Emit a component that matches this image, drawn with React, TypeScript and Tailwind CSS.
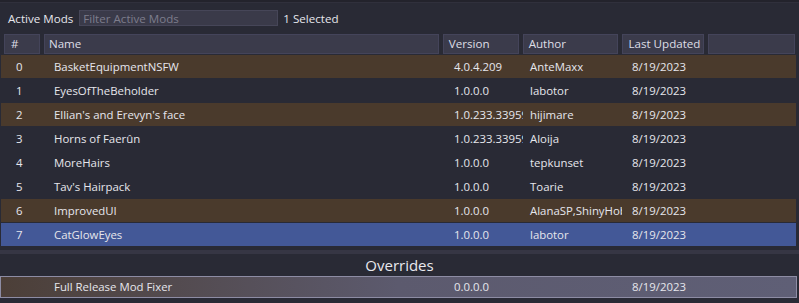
import React from "react";

type Row = { n: number; name: string; version: string; author: string; date: string; kind: "brown" | "plain" | "sel" };

const rows: Row[] = [
  { n: 0, name: "BasketEquipmentNSFW", version: "4.0.4.209", author: "AnteMaxx", date: "8/19/2023", kind: "brown" },
  { n: 1, name: "EyesOfTheBeholder", version: "1.0.0.0", author: "labotor", date: "8/19/2023", kind: "plain" },
  { n: 2, name: "Ellian's and Erevyn's face", version: "1.0.233.33959", author: "hijimare", date: "8/19/2023", kind: "brown" },
  { n: 3, name: "Horns of Faerûn", version: "1.0.233.33959", author: "Aloija", date: "8/19/2023", kind: "plain" },
  { n: 4, name: "MoreHairs", version: "1.0.0.0", author: "tepkunset", date: "8/19/2023", kind: "plain" },
  { n: 5, name: "Tav's Hairpack", version: "1.0.0.0", author: "Toarie", date: "8/19/2023", kind: "plain" },
  { n: 6, name: "ImprovedUI", version: "1.0.0.0", author: "AlanaSP,ShinyHobo", date: "8/19/2023", kind: "brown" },
  { n: 7, name: "CatGlowEyes", version: "1.0.0.0", author: "labotor", date: "8/19/2023", kind: "sel" },
];

const font = { fontFamily: '"Open Sans", "Noto Sans", sans-serif' };

export default function App() {
  return (
    <div className="w-[799px] h-[303px] bg-[#292a35] text-[#e6e6ec] text-[11.4px] overflow-hidden relative" style={font}>
      <div className="h-[3px] bg-[#23232c] border-b border-[#30303c]" />
      <div className="flex items-center h-[16px] mt-[7px] pl-[8px] text-[11.6px]">
        <span className="mt-[2px]">Active Mods</span>
        <div className="ml-[6px] w-[199px] h-[16px] bg-[#3a3a49] border border-[#464658] flex items-center pl-[3px] text-[#7d7d8c]">
          <span className="mt-[1px]">Filter Active Mods</span>
        </div>
        <span className="ml-[5px] mt-[2px]">1 Selected</span>
      </div>
      <div className="flex gap-[4px] mt-[8px] px-[4px] h-[20px] text-[#dedee6] text-[11.6px]">
        <div className="w-[36px] bg-[#3b3b4b] border border-[#44445a] flex items-center pl-[6px]">#</div>
        <div className="w-[396px] bg-[#3b3b4b] border border-[#44445a] flex items-center pl-[4px]">Name</div>
        <div className="w-[76px] bg-[#3b3b4b] border border-[#44445a] flex items-center pl-[5px]">Version</div>
        <div className="w-[96px] bg-[#3b3b4b] border border-[#44445a] flex items-center pl-[5px]">Author</div>
        <div className="w-[82px] bg-[#3b3b4b] border border-[#44445a] flex items-center pl-[5px]">Last Updated</div>
        <div className="w-[87px] bg-[#3b3b4b] border border-[#44445a]" />
      </div>
      <div className="flex flex-col gap-[1px] mt-[1px] pl-[1px] pr-[3px]">
        {rows.map((r) => (
          <div
            key={r.n}
            className={
              "flex h-[23px] items-center " +
              (r.kind === "brown" ? "bg-[#4a3a2c]" : r.kind === "sel" ? "bg-[#435897]" : "bg-[#292a35]")
            }
          >
            <div className="w-[43px] pl-[15px] shrink-0">{r.n}</div>
            <div className="w-[400px] pl-[10px] shrink-0 overflow-hidden whitespace-nowrap">{r.name}</div>
            <div className="w-[79px] pl-[10px] shrink-0 overflow-hidden whitespace-nowrap">{r.version}</div>
            <div className="w-[99px] pl-[7px] shrink-0 overflow-hidden whitespace-nowrap">{r.author}</div>
            <div className="w-[90px] pl-[10px] shrink-0 whitespace-nowrap">{r.date}</div>
          </div>
        ))}
      </div>
      <div className="mt-[4px] h-[4px] bg-[#363644]" />
      <div className="h-[22px] flex items-center justify-center text-[15px] text-[#e8e8ee]">Overrides</div>
      <div className="flex h-[22px] items-center border border-[#8d8ca4] mr-[2px] bg-gradient-to-r from-[#4c3f38] via-[#5c5a6e] to-[#5f5f76]">
        <div className="w-[43px] shrink-0" />
        <div className="w-[400px] pl-[10px] shrink-0 whitespace-nowrap">Full Release Mod Fixer</div>
        <div className="w-[79px] pl-[10px] shrink-0">0.0.0.0</div>
        <div className="w-[99px] shrink-0" />
        <div className="w-[90px] pl-[10px] shrink-0">8/19/2023</div>
      </div>
    </div>
  );
}
